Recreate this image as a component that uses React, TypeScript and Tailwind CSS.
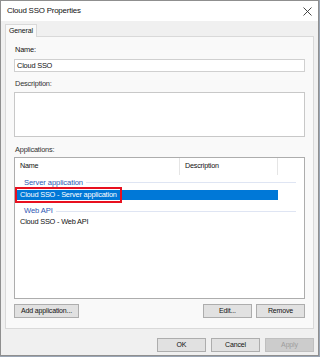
const font = { fontFamily: '"Liberation Sans", Arial, sans-serif' };

const Btn = ({ label, w, disabled }: { label: string; w: string; disabled?: boolean }) => (
  <div
    className={`${w} h-[14px] flex items-center justify-center border text-[7px] tracking-[-0.15px] ${
      disabled ? "bg-[#cccccc] border-[#bfbfbf] text-[#9d9d9d]" : "bg-[#e1e1e1] border-[#adadad] text-[#111]"
    }`}
  >
    {label}
  </div>
);

const Group = ({ label, h, pt }: { label: string; h: string; pt: string }) => (
  <div className={`${h} ${pt} flex items-center pl-[9px] pr-[8px] gap-[3px]`}>
    <span className="text-[#2d57b3] leading-[12px] text-[7.6px] tracking-[-0.1px]">{label}</span>
    <div className="flex-1 h-px bg-[#dfe5f3]" />
  </div>
);

const App = () => {
  return (
    <div className="w-[320px] h-[357px] bg-[#9aa5b4] text-[#111]" style={font}>
      <div className="w-[319px] h-[356px] border border-[#8f8f8f] flex flex-col bg-[#f0f0f0]">
        {/* title bar */}
        <div className="h-[20px] bg-white flex items-center justify-between pl-[6px] pr-[5px]">
          <span className="text-[7.9px] tracking-[-0.2px]">Cloud SSO Properties</span>
          <svg width="9" height="9" viewBox="0 0 9 9" className="mr-[1px]">
            <path d="M0.5 0.5L8.5 8.5M8.5 0.5L0.5 8.5" stroke="#333" strokeWidth="0.9" />
          </svg>
        </div>

        {/* body */}
        <div className="flex-1 flex flex-col px-[4px] pt-[3px]">
          <div className="flex">
            <div className="relative z-10 -mb-px h-[13px] w-[32px] pl-[3px] flex items-center bg-[#f9f9f9] border border-b-0 border-[#d9d9d9] text-[7px] tracking-[-0.15px]">
              General
            </div>
          </div>
          <div className="w-[309px] h-[293px] border border-[#d9d9d9] bg-[#f9f9f9] px-[8px] pt-[7px] flex flex-col text-[7.4px] tracking-[-0.2px]">
            <div className="h-[12px] leading-[12px] pl-[1px]">Name:</div>
            <div className="mt-[3px] h-[13px] bg-white border border-[#d0d0d0] flex items-center px-[2px]">
              Cloud SSO
            </div>
            <div className="mt-[6px] h-[12px] leading-[12px] pl-[1px] text-[#333]">Description:</div>
            <div className="mt-[2px] h-[45px] bg-white border border-[#c8c8c8]" />
            <div className="mt-[7px] h-[12px] leading-[12px] pl-[1px] text-[#333]">Applications:</div>

            {/* list */}
            <div className="mt-[1px] h-[142px] bg-white border border-[#adadad] relative">
              <div className="h-[17px] flex text-[7.2px]">
                <div className="w-[165px] pl-[5px] flex items-center border-r border-[#e5e5e5]">Name</div>
                <div className="w-[98px] pl-[5px] flex items-center border-r border-[#e5e5e5]">Description</div>
              </div>
              <Group label="Server application" h="h-[15px]" pt="pt-0" />
              <div className="h-[10px] w-[262px] bg-[#0078d7] text-white flex items-center pl-[4px] ml-[1px]">
                Cloud SSO - Server application
              </div>
              <Group label="Web API" h="h-[17px]" pt="pt-[5px]" />
              <div className="h-[10px] flex items-center pl-[5px]">Cloud SSO - Web API</div>

              <div className="absolute left-0 top-[29px] w-[107px] h-[16px] border-2 border-[#e8101f]" />
            </div>

            <div className="mt-[5px] flex items-center">
              <Btn label="Add application..." w="w-[65px]" />
              <div className="flex-1" />
              <Btn label="Edit..." w="w-[49px]" />
              <div className="w-[4px]" />
              <Btn label="Remove" w="w-[49px]" />
            </div>
          </div>

          <div className="mt-[9px] flex justify-end gap-[5px]">
            <Btn label="OK" w="w-[49px]" />
            <Btn label="Cancel" w="w-[49px]" />
            <Btn label="Apply" w="w-[49px]" disabled />
          </div>
        </div>
      </div>
    </div>
  );
};

export default App;
